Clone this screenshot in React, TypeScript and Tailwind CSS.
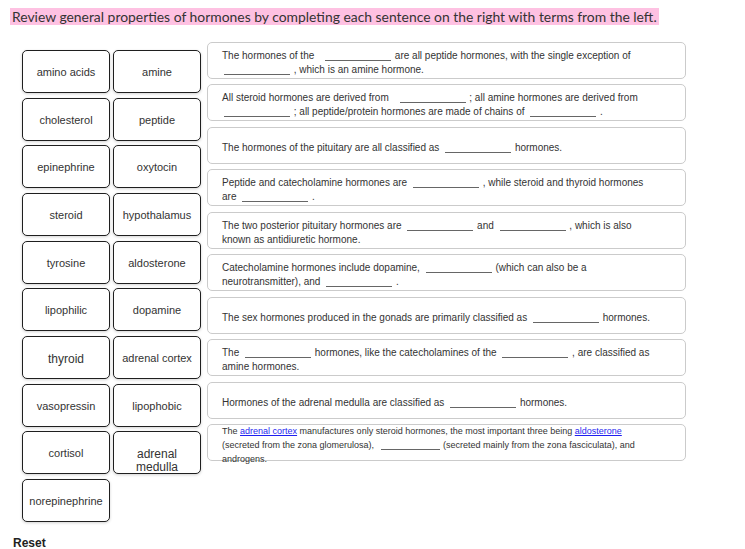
import React from "react";

const terms = [
  ["amino acids", "amine"],
  ["cholesterol", "peptide"],
  ["epinephrine", "oxytocin"],
  ["steroid", "hypothalamus"],
  ["tyrosine", "aldosterone"],
  ["lipophilic", "dopamine"],
  ["thyroid", "adrenal cortex"],
  ["vasopressin", "lipophobic"],
  ["cortisol", "adrenal medulla"],
  ["norepinephrine"],
];

// a few labels are rendered a bit bigger in the original
const bigTerms = ["thyroid", "adrenal medulla"];

function Blank({ lead = "ml-[3px]", width = "w-[66px]" }: { lead?: string; width?: string }) {
  return (
    <span className={`inline-block ${width} ${lead} mr-[1px] h-[1px] bg-[#666] relative top-[2px]`} />
  );
}

function TermCard({ label }: { label: string }) {
  const big = bigTerms.includes(label);
  return (
    <div
      className={`h-[43px] rounded-[5px] border border-[#1f1f1f] bg-white px-[2px] text-center text-[#333] leading-[13px] shadow-[0_1px_3px_rgba(0,0,0,0.18)] ${
        big ? "text-[12px] pt-[16px]" : "text-[11px] pt-[15px]"
      }`}
    >
      {label}
    </div>
  );
}

function Sentence({ children }: { children: React.ReactNode }) {
  return (
    <div className="h-[37px] rounded-[5px] border border-[#cbcbcb] bg-white px-[14px] pt-[5px] flex items-center">
      <p className="text-[10px] leading-[14px] text-[#333]">{children}</p>
    </div>
  );
}

export default function App() {
  return (
    <div className="w-[745px] h-[549px] bg-white overflow-hidden font-['Liberation_Sans',Arial,sans-serif] text-[#333]">
      {/* Instructions */}
      <div className="pt-[8px] pl-[10px] flex">
        <span className="bg-[#fec1e2] px-[2px] text-[13.9px] leading-[17px] font-['Lato',sans-serif] text-[#333]">
          Review general properties of hormones by completing each sentence on the right with terms from the left.
        </span>
      </div>

      <div className="flex items-start mt-[17px]">
        {/* Term bank */}
        <div className="ml-[22px] mt-[8px] grid grid-cols-[88px_88px] gap-x-[3px] gap-y-[4.67px]">
          {terms.flat().map((t) => (
            <TermCard key={t} label={t} />
          ))}
        </div>

        {/* Sentences */}
        <div className="ml-[6px] w-[479px] flex flex-col gap-[5.44px]">
          <Sentence>
            The hormones of the <Blank lead="ml-[8px]" /> are all peptide hormones, with the single exception of
            <br />
            <Blank lead="ml-[2px]" /> , which is an amine hormone.
          </Sentence>
          <Sentence>
            All steroid hormones are derived from <Blank lead="ml-[8px]" /> ; all amine hormones are derived from
            <br />
            <Blank lead="ml-[2px]" /> ; all peptide/protein hormones are made of chains of <Blank /> .
          </Sentence>
          <Sentence>
            The hormones of the pituitary are all classified as <Blank /> hormones.
          </Sentence>
          <Sentence>
            Peptide and catecholamine hormones are <Blank /> , while steroid and thyroid hormones
            <br />
            are <Blank /> .
          </Sentence>
          <Sentence>
            The two posterior pituitary hormones are <Blank /> and <Blank /> , which is also
            <br />
            known as antidiuretic hormone.
          </Sentence>
          <Sentence>
            Catecholamine hormones include dopamine, <Blank /> (which can also be a
            <br />
            neurotransmitter), and <Blank /> .
          </Sentence>
          <Sentence>
            The sex hormones produced in the gonads are primarily classified as <Blank /> hormones.
          </Sentence>
          <Sentence>
            The <Blank /> hormones, like the catecholamines of the <Blank /> , are classified as
            <br />
            amine hormones.
          </Sentence>
          <Sentence>
            Hormones of the adrenal medulla are classified as <Blank /> hormones.
          </Sentence>
          <div className="h-[37px] rounded-[5px] border border-[#cbcbcb] bg-white px-[14px] text-[9px] text-[#333]">
            <div className="leading-[13px] whitespace-nowrap">
              The{" "}
              <a href="#" className="text-[#1f1ff0] underline">
                adrenal cortex
              </a>{" "}
              manufactures only steroid hormones, the most important three being{" "}
              <a href="#" className="text-[#1f1ff0] underline">
                aldosterone
              </a>
            </div>
            <div className="leading-[15px] whitespace-nowrap">
              (secreted from the zona glomerulosa), <Blank lead="ml-[4px]" width="w-[59px]" /> (secreted mainly from the
              zona fasciculata), and
            </div>
            <div className="leading-[13px]">androgens.</div>
          </div>
        </div>
      </div>

      <div className="pl-[13px] mt-[15px] text-[12px] leading-[12px] font-bold text-[#222]">Reset</div>
    </div>
  );
}
